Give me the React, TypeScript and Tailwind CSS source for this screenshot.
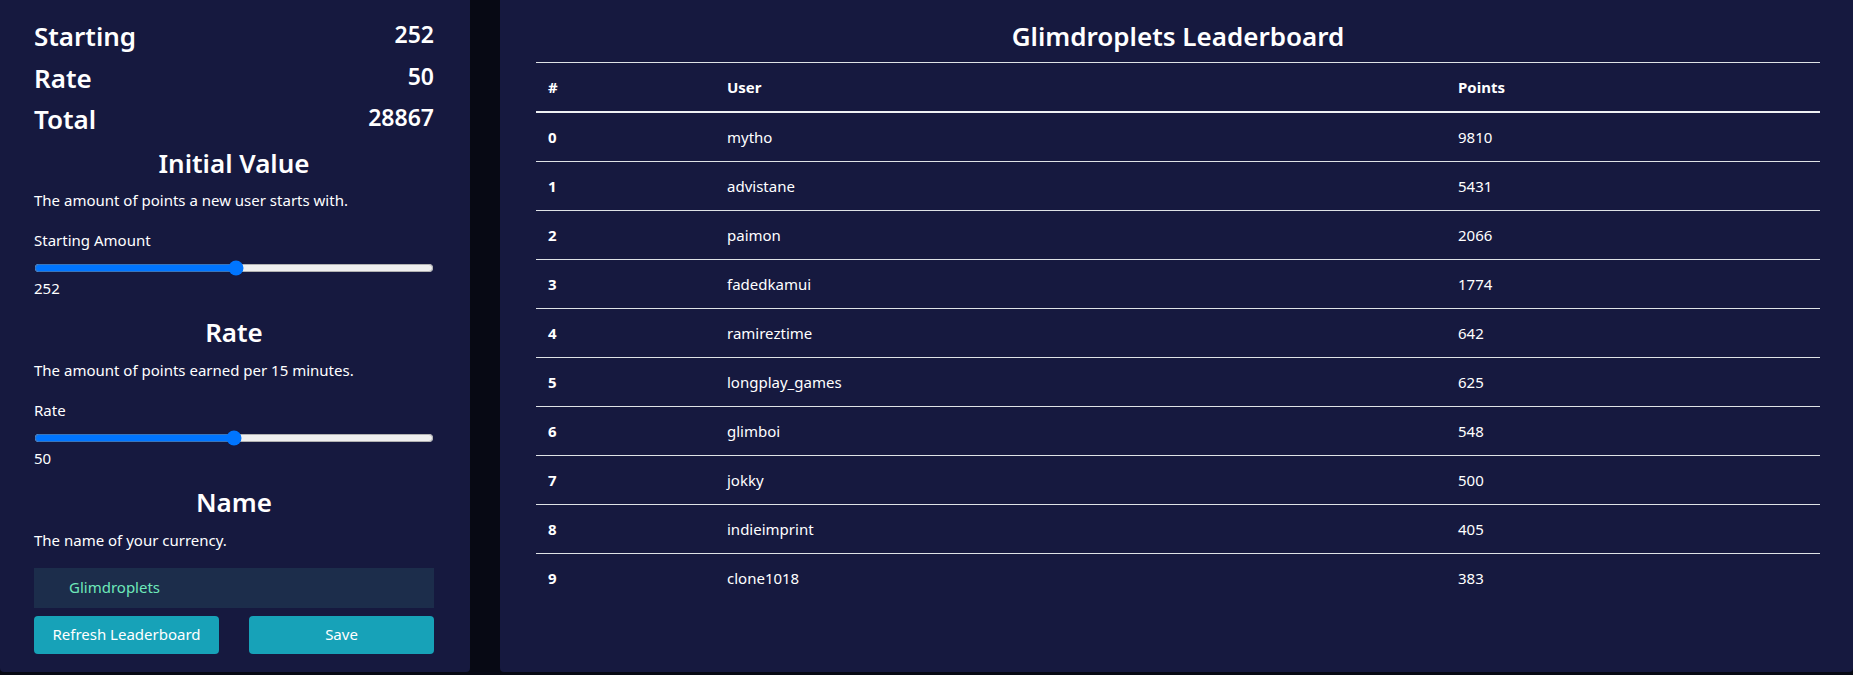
import React from "react";

const rows: [number, string, number][] = [
  [0, "mytho", 9810],
  [1, "advistane", 5431],
  [2, "paimon", 2066],
  [3, "fadedkamui", 1774],
  [4, "ramireztime", 642],
  [5, "longplay_games", 625],
  [6, "glimboi", 548],
  [7, "jokky", 500],
  [8, "indieimprint", 405],
  [9, "clone1018", 383],
];

const font = { fontFamily: '"Segoe UI", "Noto Sans", "Open Sans", sans-serif' };

function Stat({ label, value }: { label: string; value: string }) {
  return (
    <div className="flex items-start justify-between">
      <h3 className="text-[26px] font-semibold leading-[33.6px] mb-2">{label}</h3>
      <h4 className="text-[23px] font-semibold leading-[28.8px] mb-2">{value}</h4>
    </div>
  );
}

export default function App() {
  return (
    <div
      className="w-[1853px] h-[675px] bg-[#070914] text-white flex overflow-hidden"
      style={font}
    >
      <div className="w-[470px] h-[672px] shrink-0 bg-[#16193f] rounded-b-[4px] pt-5 pl-[34px] pr-[36px]">
        <Stat label="Starting" value="252" />
        <Stat label="Rate" value="50" />
        <Stat label="Total" value="28867" />
        <h3 className="text-[26px] font-semibold leading-[33.6px] mb-2 text-center mt-[2px]">
          Initial Value
        </h3>
        <p className="text-[15px] leading-6 mb-4">The amount of points a new user starts with.</p>
        <label className="block text-[15px] leading-6 mb-2">Starting Amount</label>
        <input
          type="range"
          min={0}
          max={500}
          defaultValue={252}
          className="block w-full h-4 m-0"
        />
        <p className="text-[15px] leading-6 mb-4">252</p>
        <h3 className="text-[26px] font-semibold leading-[33.6px] mb-2 text-center">Rate</h3>
        <p className="text-[15px] leading-6 mb-4">The amount of points earned per 15 minutes.</p>
        <label className="block text-[15px] leading-6 mb-2">Rate</label>
        <input
          type="range"
          min={0}
          max={100}
          defaultValue={50}
          className="block w-full h-4 m-0"
        />
        <p className="text-[15px] leading-6 mb-4">50</p>
        <h3 className="text-[26px] font-semibold leading-[33.6px] mb-2 text-center">Name</h3>
        <p className="text-[15px] leading-6 mb-4">The name of your currency.</p>
        <div className="h-10 bg-[#1c2d4b] flex items-center pl-[35px] text-[#6ee8ba] text-[15px]">
          Glimdroplets
        </div>
        <div className="grid grid-cols-2 gap-[30px] mt-2">
          <button className="h-[38px] rounded-[4px] bg-[#17a2b8] text-white text-[15px]">
            Refresh Leaderboard
          </button>
          <button className="h-[38px] rounded-[4px] bg-[#17a2b8] text-white text-[15px]">
            Save
          </button>
        </div>
      </div>
      <div className="w-[30px] shrink-0" />
      <div className="flex-1 h-[672px] bg-[#16193f] rounded-b-[4px] pt-5 pl-[36px] pr-[33px]">
        <h3 className="text-[26px] font-semibold leading-[33.6px] mb-2 text-center">
          Glimdroplets Leaderboard
        </h3>
        <table className="w-full border-collapse text-[15px] leading-6 text-left">
          <colgroup>
            <col className="w-[179px]" />
            <col className="w-[731px]" />
            <col />
          </colgroup>
          <thead>
            <tr className="border-t border-[#dee2e6]">
              <th className="px-3 py-3 font-bold">#</th>
              <th className="px-3 py-3 font-bold">User</th>
              <th className="px-3 py-3 font-bold">Points</th>
            </tr>
          </thead>
          <tbody className="border-t-2 border-[#eef0f2]">
            {rows.map(([i, u, p], idx) => (
              <tr
                key={i}
                className={idx < rows.length - 1 ? "border-b border-[#dee2e6]" : ""}
              >
                <th className="px-3 py-3 font-bold">{i}</th>
                <td className="px-3 py-3">{u}</td>
                <td className="px-3 py-3">{p}</td>
              </tr>
            ))}
          </tbody>
        </table>
      </div>
    </div>
  );
}
